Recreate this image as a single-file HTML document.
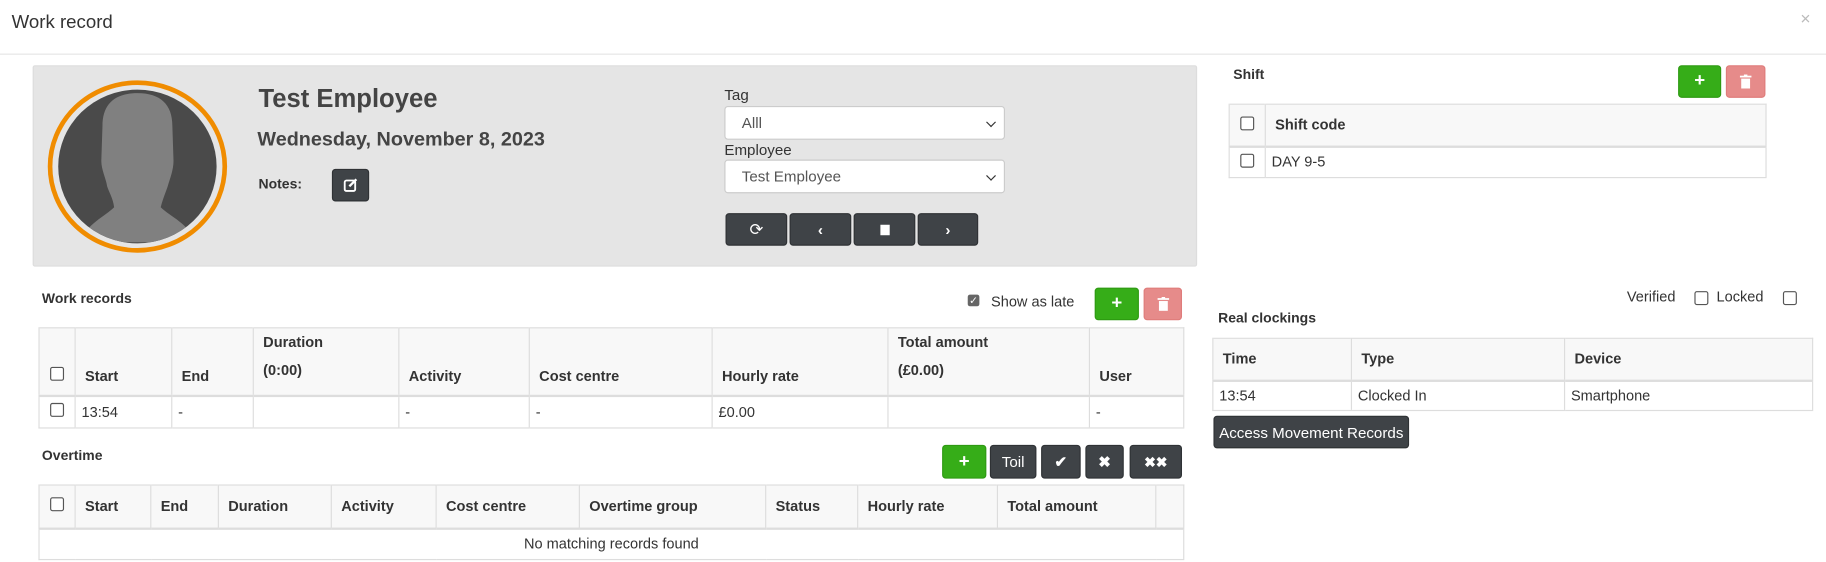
<!DOCTYPE html>
<html><head><meta charset="utf-8"><style>
html,body{margin:0;padding:0;width:1826px;height:562px;overflow:hidden;background:#fff}
#w{position:absolute;left:0;top:0;width:1568px;height:483px;transform:scale(1.16454);transform-origin:0 0;font-family:"Liberation Sans",Arial,sans-serif;font-size:13px;color:#333}
.a{position:absolute}
.b{font-weight:bold}
.btn{position:absolute;border-radius:3px;color:#fff;display:flex;align-items:center;justify-content:center;box-sizing:border-box}
.dk{background:#3f4347;border:1px solid #2f3235}
.gr{background:#36ad18;border:1px solid #2e9a12}
.rd{background:#e68b8a;border:1px solid #df7c7b}
.sel{position:absolute;background:#fff;border:1px solid #ccc;border-radius:3px;box-sizing:border-box;padding-left:14px;display:flex;align-items:center;color:#555;font-size:13px}
.sel:after{content:"";position:absolute;right:8px;top:10px;width:5px;height:5px;border-right:1.5px solid #333;border-bottom:1.5px solid #333;transform:rotate(45deg)}
table{position:absolute;border-collapse:collapse;border:1px solid #ddd;font-size:12.5px;table-layout:fixed}
th{background:#f8f8f8;text-align:left;font-weight:bold;border-left:1px solid #ddd;border-bottom:2px solid #ddd;padding:0 8px;box-sizing:border-box;vertical-align:bottom;padding-bottom:9px}
td{border-left:1px solid #ddd;padding:0 5px;box-sizing:border-box;border-bottom:1px solid #ddd}
.cb{display:inline-block;width:10px;height:10px;border:1px solid #555;border-radius:2px;background:#fff}
</style></head><body><div id="w">
<div class="a" style="left:10px;top:11px;font-size:16px;color:#333">Work record</div>
<div class="a" style="left:1546px;top:8px;font-size:15px;color:#bbb">×</div>
<div class="a" style="left:0;top:46px;width:1568px;height:1px;background:#e5e5e5"></div>

<div class="a" style="left:28px;top:56px;width:1000px;height:173px;background:#e5e5e5;border:1px solid #ddd;border-radius:2px;box-sizing:border-box"></div>
<svg class="a" style="left:40px;top:68px" width="157" height="150" viewBox="0 0 157 150">
<ellipse cx="78" cy="75" rx="75" ry="72" fill="#e5e5e5" stroke="#f08c00" stroke-width="4"/>
<ellipse cx="78" cy="75" rx="68" ry="66" fill="#4a4a4a"/>
<clipPath id="c"><ellipse cx="78" cy="75" rx="68" ry="66"/></clipPath>
<path clip-path="url(#c)" fill="#808080" d="M78 12 C58 12 48 22 48 40 L47 70 C47 78 51 85 52 92 C54 98 57 102 58 110 C50 118 35 124 28 140 L128 140 C122 124 106 118 98 110 C100 102 102 98 104 92 C106 85 109 78 109 70 L108 40 C108 22 98 12 78 12Z"/>
</svg>
<div class="a b" style="left:222px;top:72px;font-size:22px;color:#444">Test Employee</div>
<div class="a b" style="left:221px;top:110px;font-size:17px;color:#444">Wednesday, November 8, 2023</div>
<div class="a b" style="left:222px;top:151px;font-size:12px">Notes:</div>
<div class="btn dk" style="left:285px;top:145px;width:32px;height:28px"><svg width="12" height="12" viewBox="0 0 12 12"><rect x="1" y="2" width="9" height="9" rx="1.5" fill="none" stroke="#fff" stroke-width="1.6"/><path d="M5 7 L11 1" stroke="#fff" stroke-width="2"/></svg></div>

<div class="a" style="left:622px;top:74px;font-size:13px">Tag</div>
<div class="sel" style="left:622px;top:91px;width:241px;height:29px">Alll</div>
<div class="a" style="left:622px;top:121px;font-size:13px">Employee</div>
<div class="sel" style="left:622px;top:137px;width:241px;height:29px">Test Employee</div>
<div class="btn dk" style="left:623px;top:183px;width:53px;height:28px;font-size:14px">⟳</div>
<div class="btn dk" style="left:678px;top:183px;width:53px;height:28px;font-weight:bold">‹</div>
<div class="btn dk" style="left:733px;top:183px;width:53px;height:28px"><div style="width:8px;height:9px;background:#fff"></div></div>
<div class="btn dk" style="left:788px;top:183px;width:52px;height:28px;font-weight:bold">›</div>

<div class="a b" style="left:1059px;top:57px;font-size:12px">Shift</div>
<div class="btn gr" style="left:1441px;top:56px;width:37px;height:28px;font-size:16px;font-weight:bold">+</div>
<div class="btn rd" style="left:1482px;top:56px;width:34px;height:28px"><svg width="10" height="12" viewBox="0 0 10 12"><rect x="0" y="1" width="10" height="1.5" fill="#fff"/><rect x="3.5" y="0" width="3" height="1.5" fill="#fff"/><rect x="1.2" y="3.5" width="7.6" height="8.5" fill="#fff"/></svg></div>
<table style="left:1055px;top:89px;width:462px">
<tr style="height:36px"><th style="width:31px;padding:0 0 0 9px;vertical-align:middle"><span class="cb"></span></th><th style="vertical-align:middle;padding-bottom:0">Shift code</th></tr>
<tr style="height:27px"><td style="padding-left:9px"><span class="cb"></span></td><td>DAY 9-5</td></tr>
</table>

<div class="a b" style="left:36px;top:249px;font-size:12px">Work records</div>
<div class="a" style="left:831px;top:253px;width:10px;height:10px;background:#666;border-radius:2px;color:#fff;font-size:9px;line-height:10px;text-align:center">✓</div>
<div class="a" style="left:851px;top:252px;font-size:12.5px">Show as late</div>
<div class="btn gr" style="left:940px;top:247px;width:38px;height:28px;font-size:16px;font-weight:bold">+</div>
<div class="btn rd" style="left:982px;top:247px;width:33px;height:28px"><svg width="10" height="12" viewBox="0 0 10 12"><rect x="0" y="1" width="10" height="1.5" fill="#fff"/><rect x="3.5" y="0" width="3" height="1.5" fill="#fff"/><rect x="1.2" y="3.5" width="7.6" height="8.5" fill="#fff"/></svg></div>
<table style="left:33px;top:281px;width:983px">
<colgroup><col style="width:31px"><col style="width:83px"><col style="width:70px"><col style="width:125px"><col style="width:112px"><col style="width:157px"><col style="width:151px"><col style="width:173px"><col style="width:81px"></colgroup>
<tr style="height:57px"><th style="padding-left:9px"><span class="cb"></span></th><th>Start</th><th>End</th><th style="line-height:24px">Duration<br>(0:00)</th><th>Activity</th><th>Cost centre</th><th>Hourly rate</th><th style="line-height:24px">Total amount<br>(£0.00)</th><th>User</th></tr>
<tr style="height:27px"><td style="padding-left:9px"><span class="cb"></span></td><td>13:54</td><td>-</td><td></td><td>-</td><td>-</td><td>£0.00</td><td></td><td>-</td></tr>
</table>

<div class="a b" style="left:36px;top:384px;font-size:12px">Overtime</div>
<div class="btn gr" style="left:809px;top:382px;width:38px;height:29px;font-size:16px;font-weight:bold">+</div>
<div class="btn dk" style="left:850px;top:382px;width:40px;height:29px;font-size:13px">Toil</div>
<div class="btn dk" style="left:894px;top:382px;width:34px;height:29px;font-size:13px;font-weight:bold">✔</div>
<div class="btn dk" style="left:932px;top:382px;width:33px;height:29px;font-size:13px;font-weight:bold">✖</div>
<div class="btn dk" style="left:970px;top:382px;width:45px;height:29px;font-size:12px;font-weight:bold">✖✖</div>
<table style="left:33px;top:416px;width:983px">
<colgroup><col style="width:31px"><col style="width:65px"><col style="width:58px"><col style="width:97px"><col style="width:90px"><col style="width:123px"><col style="width:160px"><col style="width:79px"><col style="width:120px"><col style="width:136px"><col style="width:24px"></colgroup>
<tr style="height:37px"><th style="padding-left:9px;vertical-align:middle;padding-bottom:0"><span class="cb"></span></th><th style="vertical-align:middle;padding-bottom:0">Start</th><th style="vertical-align:middle;padding-bottom:0">End</th><th style="vertical-align:middle;padding-bottom:0">Duration</th><th style="vertical-align:middle;padding-bottom:0">Activity</th><th style="vertical-align:middle;padding-bottom:0">Cost centre</th><th style="vertical-align:middle;padding-bottom:0">Overtime group</th><th style="vertical-align:middle;padding-bottom:0">Status</th><th style="vertical-align:middle;padding-bottom:0">Hourly rate</th><th style="vertical-align:middle;padding-bottom:0">Total amount</th><th></th></tr>
<tr style="height:27px"><td colspan="11" style="text-align:center">No matching records found</td></tr>
</table>

<div class="a" style="left:1397px;top:248px;font-size:12.5px">Verified</div>
<div class="a cb" style="left:1455px;top:250px"></div>
<div class="a" style="left:1474px;top:248px;font-size:12.5px">Locked</div>
<div class="a cb" style="left:1531px;top:250px"></div>
<div class="a b" style="left:1046px;top:266px;font-size:12px">Real clockings</div>
<table style="left:1041px;top:290px;width:515px">
<colgroup><col style="width:119px"><col style="width:183px"><col style="width:213px"></colgroup>
<tr style="height:36px"><th style="vertical-align:middle;padding-bottom:0">Time</th><th style="vertical-align:middle;padding-bottom:0">Type</th><th style="vertical-align:middle;padding-bottom:0">Device</th></tr>
<tr style="height:26px"><td>13:54</td><td>Clocked In</td><td>Smartphone</td></tr>
</table>
<div class="btn dk" style="left:1042px;top:357px;width:168px;height:28px;font-size:13px">Access Movement Records</div>
</div></body></html>
